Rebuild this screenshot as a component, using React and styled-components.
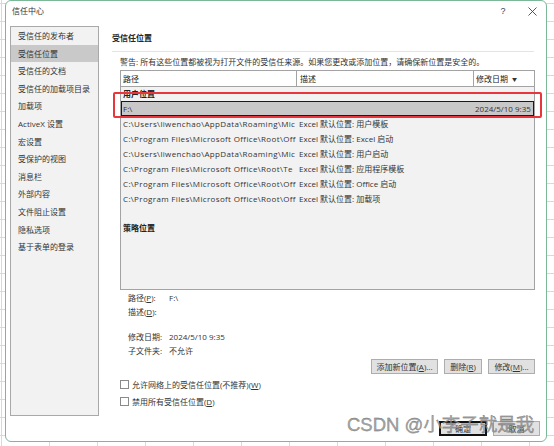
import styled, { createGlobalStyle } from "styled-components";

const GlobalStyle = createGlobalStyle`
  html, body {
    margin: 0;
    padding: 0;
    background: #fff;
  }
  * {
    box-sizing: border-box;
  }
`;

const Page = styled.div`
  position: relative;
  width: 554px;
  height: 446px;
  overflow: hidden;
  background-color: #fff;
  background-image: linear-gradient(#d9d9d9 1px, transparent 1px),
    linear-gradient(90deg, #d9d9d9 1px, transparent 1px);
  background-size: 48px 18px;
  background-position: 1px 3px;
  font-family: "Open Sans", "Noto Sans CJK SC", sans-serif;
  font-size: 8px;
  color: #222;
`;

const Dialog = styled.div`
  position: relative;
  margin-left: 5px;
  width: 542px;
  height: 442px;
  background: #fff;
  border: 1px solid #7bb898;
  border-radius: 6px;
  display: flex;
  flex-direction: column;
`;

const TitleBar = styled.div`
  height: 25px;
  display: flex;
  align-items: flex-start;
  padding: 3px 9px 0 6px;
  line-height: 14px;
`;

const Title = styled.div`
  flex: 1;
  color: #333;
`;

const TitleButton = styled.div`
  width: 10px;
  height: 14px;
  display: flex;
  align-items: center;
  justify-content: center;
  margin-left: ${(p) => p.$gap || 0}px;
  color: #444;
  font-family: "Liberation Sans", sans-serif;
  font-size: 9px;
`;

const Body = styled.div`
  flex: 1;
  display: flex;
`;

const Nav = styled.div`
  margin-left: 4px;
  width: 89px;
  height: 390px;
  background: #f2f2f2;
  border: 1px solid #a9a9a9;
`;

const NavItem = styled.div`
  height: 17.6px;
  line-height: 17.6px;
  padding-left: 7px;
  white-space: nowrap;
  color: #333;
  background: ${(p) => (p.$active ? "#c9c9c9" : "transparent")};
`;

const Main = styled.div`
  margin-left: 13px;
  display: flex;
  flex-direction: column;
`;

const Heading = styled.div`
  margin-top: 5px;
  line-height: 14px;
  font-weight: 600;
  color: #262626;
`;

const Separator = styled.div`
  margin-top: 6px;
  width: 422px;
  height: 1px;
  background: #e4e4e4;
`;

const Content = styled.div`
  margin-left: 8px;
  width: 415px;
  display: flex;
  flex-direction: column;
`;

const Warning = styled.div`
  margin-top: 4px;
  line-height: 12px;
  white-space: nowrap;
  color: #333;
`;

const Table = styled.div`
  position: relative;
  margin-top: 2px;
  height: 220px;
  border: 1px solid #a3a3a3;
  background: #f2f2f2;
`;

const cols = "175px 177px 1fr";

const HeaderRow = styled.div`
  display: grid;
  grid-template-columns: ${cols};
  height: 16px;
  background: #fff;
  border-bottom: 1px solid #a3a3a3;
`;

const HeaderCell = styled.div`
  display: flex;
  align-items: center;
  gap: 4px;
  padding-left: ${(p) => p.$pad || 2}px;
  border-left: ${(p) => (p.$first ? "none" : "1px solid #a3a3a3")};
  color: #222;
`;

const Caret = styled.span`
  font-size: 5px;
  color: #333;
`;

const GroupLabel = styled.div`
  height: 14px;
  line-height: 14px;
  padding-left: 2px;
  font-weight: 700;
  color: #222;
`;

const Row = styled.div`
  display: grid;
  grid-template-columns: ${cols};
  height: 15px;
  line-height: 15px;
  color: #333;
  background: ${(p) => (p.$selected ? "#c8c8c8" : "transparent")};
  box-shadow: ${(p) => (p.$selected ? "inset 0 0 0 1px #1a1a1a" : "none")};
`;

const Cell = styled.div`
  overflow: hidden;
  white-space: nowrap;
  padding-left: ${(p) => p.$pad ?? 2}px;
  padding-right: ${(p) => p.$padRight ?? 0}px;
  text-align: ${(p) => p.$align || "left"};
  letter-spacing: ${(p) => (p.$path ? "0.35px" : "normal")};
`;

const Spacer = styled.div`
  height: ${(p) => p.$h}px;
`;

const Highlight = styled.div`
  position: absolute;
  left: 107px;
  top: 91px;
  width: 429px;
  height: 26px;
  border: 2px solid #e8363c;
  border-radius: 2px;
  pointer-events: none;
`;

const Details = styled.div`
  margin-top: 1px;
  padding-left: 8px;
`;

const DetailLine = styled.div`
  display: flex;
  height: 14px;
  line-height: 14px;
  margin-top: ${(p) => p.$gap || 0}px;
  color: #333;
`;

const DetailLabel = styled.div`
  width: 41px;
`;

const ButtonRow = styled.div`
  display: flex;
  justify-content: flex-end;
  gap: ${(p) => p.$gap || 6}px;
  margin-top: ${(p) => p.$top || 0}px;
  margin-right: ${(p) => p.$right || 0}px;
`;

const Button = styled.div`
  width: ${(p) => p.$w}px;
  height: 15px;
  display: flex;
  align-items: center;
  justify-content: center;
  background: #e1e1e1;
  border: 1px solid ${(p) => (p.$default ? "#111" : "#adadad")};
  box-shadow: ${(p) => (p.$default ? "inset 0 0 0 1px #111" : "none")};
  color: #333;
  white-space: nowrap;
`;

const CheckRow = styled.label`
  display: flex;
  align-items: center;
  gap: 3px;
  height: 15px;
  margin-top: ${(p) => p.$top || 0}px;
  color: #333;
`;

const Box = styled.span`
  width: 9px;
  height: 9px;
  border: 1px solid #8a8a8a;
  background: #fff;
`;

const Watermark = styled.div`
  position: absolute;
  left: 347px;
  top: 413px;
  font-family: "Liberation Sans", "Noto Sans CJK SC", sans-serif;
  font-size: 18.5px;
  line-height: 24px;
  color: rgba(150, 150, 150, 0.85);
  -webkit-text-stroke: 0.3px #6a6a6a;
  white-space: nowrap;
  pointer-events: none;
`;

const navItems = [
  "受信任的发布者",
  "受信任位置",
  "受信任的文档",
  "受信任的加载项目录",
  "加载项",
  "ActiveX 设置",
  "宏设置",
  "受保护的视图",
  "消息栏",
  "外部内容",
  "文件阻止设置",
  "隐私选项",
  "基于表单的登录",
];

const locations = [
  ["C:\\Users\\liwenchao\\AppData\\Roaming\\Mic", "Excel 默认位置: 用户模板"],
  ["C:\\Program Files\\Microsoft Office\\Root\\Off", "Excel 默认位置: Excel 启动"],
  ["C:\\Users\\liwenchao\\AppData\\Roaming\\Mic", "Excel 默认位置: 用户启动"],
  ["C:\\Program Files\\Microsoft Office\\Root\\Te", "Excel 默认位置: 应用程序模板"],
  ["C:\\Program Files\\Microsoft Office\\Root\\Off", "Excel 默认位置: Office 启动"],
  ["C:\\Program Files\\Microsoft Office\\Root\\Off", "Excel 默认位置: 加载项"],
];

function CloseIcon() {
  return (
    <svg width="9" height="9" viewBox="0 0 9 9">
      <path d="M0.5 0.5 L8.5 8.5 M8.5 0.5 L0.5 8.5" stroke="#444" strokeWidth="0.9" fill="none" />
    </svg>
  );
}

export default function App() {
  return (
    <Page>
      <GlobalStyle />
      <Dialog>
        <TitleBar>
          <Title>信任中心</Title>
          <TitleButton>?</TitleButton>
          <TitleButton $gap={19}>
            <CloseIcon />
          </TitleButton>
        </TitleBar>
        <Body>
          <Nav>
            {navItems.map((item, i) => (
              <NavItem key={item} $active={i === 1}>
                {item}
              </NavItem>
            ))}
          </Nav>
          <Main>
            <Heading>受信任位置</Heading>
            <Separator />
            <Content>
              <Warning>
                警告: 所有这些位置都被视为打开文件的受信任来源。如果您更改或添加位置，请确保新位置是安全的。
              </Warning>
              <Table>
                <HeaderRow>
                  <HeaderCell $first>路径</HeaderCell>
                  <HeaderCell $pad={3}>描述</HeaderCell>
                  <HeaderCell $pad={2}>
                    修改日期 <Caret>▼</Caret>
                  </HeaderCell>
                </HeaderRow>
                <GroupLabel>用户位置</GroupLabel>
                <Row $selected>
                  <Cell>F:\</Cell>
                  <Cell />
                  <Cell $align="right" $padRight={4}>
                    2024/5/10 9:35
                  </Cell>
                </Row>
                {locations.map(([path, desc], i) => (
                  <Row key={i}>
                    <Cell $path>{path}</Cell>
                    <Cell $pad={3}>{desc}</Cell>
                    <Cell />
                  </Row>
                ))}
                <Spacer $h={15} />
                <GroupLabel>策略位置</GroupLabel>
              </Table>
              <Details>
                <DetailLine>
                  <DetailLabel>
                    路径(<u>P</u>):
                  </DetailLabel>
                  <div>F:\</div>
                </DetailLine>
                <DetailLine>
                  <DetailLabel>
                    描述(<u>D</u>):
                  </DetailLabel>
                </DetailLine>
                <DetailLine $gap={11}>
                  <DetailLabel>修改日期:</DetailLabel>
                  <div>2024/5/10 9:35</div>
                </DetailLine>
                <DetailLine>
                  <DetailLabel>子文件夹:</DetailLabel>
                  <div>不允许</div>
                </DetailLine>
              </Details>
              <ButtonRow $top={1}>
                <Button $w={67}>
                  添加新位置(<u>A</u>)...
                </Button>
                <Button $w={38}>
                  删除(<u>R</u>)
                </Button>
                <Button $w={47}>
                  修改(<u>M</u>)...
                </Button>
              </ButtonRow>
              <CheckRow $top={3}>
                <Box />
                <span>
                  允许网络上的受信任位置(不推荐)(<u>W</u>)
                </span>
              </CheckRow>
              <CheckRow $top={2}>
                <Box />
                <span>
                  禁用所有受信任位置(<u>D</u>)
                </span>
              </CheckRow>
              <ButtonRow $top={12} $right={-5}>
                <Button $w={48} $default>
                  确定
                </Button>
                <Button $w={47}>取消</Button>
              </ButtonRow>
            </Content>
          </Main>
        </Body>
        <Highlight />
      </Dialog>
      <Watermark>CSDN @小李子就是我</Watermark>
    </Page>
  );
}
